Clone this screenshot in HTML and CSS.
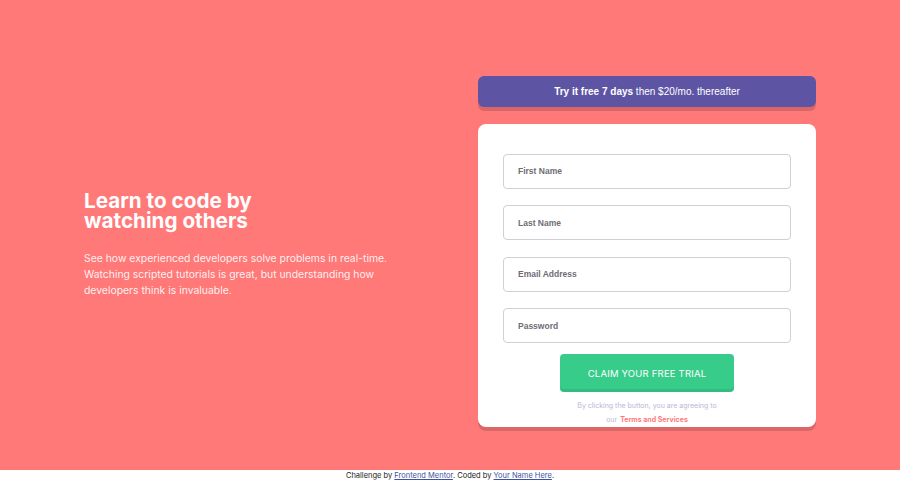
FILE: index.html
```html
<!DOCTYPE html>
<html lang="en">
<head>
  <meta charset="UTF-8" />
  <meta name="viewport" content="width=device-width, initial-scale=1.0"/>
  <title>Intro component with sign up form</title>
  <link rel="stylesheet" href="styles.css">
</head>
<body>

  <main class="intro">
    <section class="intro-text">
      <h1>Learn to code by watching others</h1>
      <p>See how experienced developers solve problems in real-time. Watching scripted tutorials is great, but understanding how developers think is invaluable.</p>
    </section>

    <section class="signup">
      <div class="trial-banner"><strong>Try it free 7 days</strong> then $20/mo. thereafter</div>

      <form class="signup-card" onsubmit="return false">
        <input type="text" placeholder="First Name" />
        <input type="text" placeholder="Last Name" />
        <input type="email" placeholder="Email Address" />
        <input type="password" placeholder="Password" />
        <button class="btn" type="submit">Claim your free trial</button>
        <p class="terms">By clicking the button, you are agreeing to our <a href="#">Terms and Services</a></p>
      </form>
    </section>
  </main>

  <footer class="attribution">
    Challenge by <a href="#">Frontend Mentor</a>. Coded by <a href="#">Your Name Here</a>.
  </footer>

</body>
</html>
```

FILE: styles.css
```css
body {
  margin: 0;
  font-family: 'Inter', sans-serif;
  background: white;
}

.intro {
  background: #ff7979;
  height: 470px;
  box-sizing: border-box;
  padding: 33px 84px 0;
  display: flex;
  justify-content: space-between;
  align-items: center;
}

.intro-text {
  width: 320px;
  margin-bottom: 14px;
  color: white;
}

.intro-text h1 {
  width: 210px;
  margin: 0 0 20px;
  font-size: 20.7px;
  font-weight: 700;
  line-height: 20px;
}

.intro-text p {
  margin: 0;
  font-size: 10.4px;
  line-height: 16px;
  color: rgba(255, 255, 255, 0.9);
}

.signup {
  width: 338px;
}

.trial-banner {
  background: #5e54a4;
  color: white;
  height: 31px;
  line-height: 31px;
  border-radius: 6px;
  box-shadow: 0 4px 0 rgba(0, 0, 0, 0.15);
  text-align: center;
  font-family: 'Liberation Sans', Arial, sans-serif;
  font-size: 10px;
  margin-bottom: 17px;
}

.signup-card {
  background: white;
  border-radius: 8px;
  box-shadow: 0 4px 0 rgba(0, 0, 0, 0.15);
  padding: 30px 25px 0;
  display: flex;
  flex-direction: column;
  align-items: center;
}

.signup-card input {
  width: 100%;
  box-sizing: border-box;
  height: 35px;
  padding: 0 14px;
  margin-bottom: 16.5px;
  border: 1px solid #cfcfd6;
  border-radius: 4px;
  font-family: 'Liberation Sans', Arial, sans-serif;
  font-size: 8.5px;
  font-weight: bold;
  color: #3d3b48;
}

.signup-card input::placeholder {
  color: #6e6d75;
}

.btn {
  width: 174px;
  height: 38px;
  margin-top: -5.5px;
  background: #38cc8b;
  color: white;
  border: none;
  border-radius: 4px;
  box-shadow: 0 -3px 0 rgba(0, 0, 0, 0.08) inset;
  font-family: 'Inter', sans-serif;
  font-size: 9.5px;
  font-weight: 400;
  letter-spacing: 0.2px;
  text-transform: uppercase;
  cursor: pointer;
}

.terms {
  width: 150px;
  margin: 7px 0 0;
  font-size: 7px;
  line-height: 14px;
  text-align: center;
  color: #bab7d4;
}

.terms a {
  margin-left: 1px;
  color: #ff7979;
  font-weight: 700;
  text-decoration: none;
}

.attribution {
  font-size: 7.5px;
  text-align: center;
  padding-top: 1px;
  color: #222;
}

.attribution a {
  color: #3e52a3;
}
```
